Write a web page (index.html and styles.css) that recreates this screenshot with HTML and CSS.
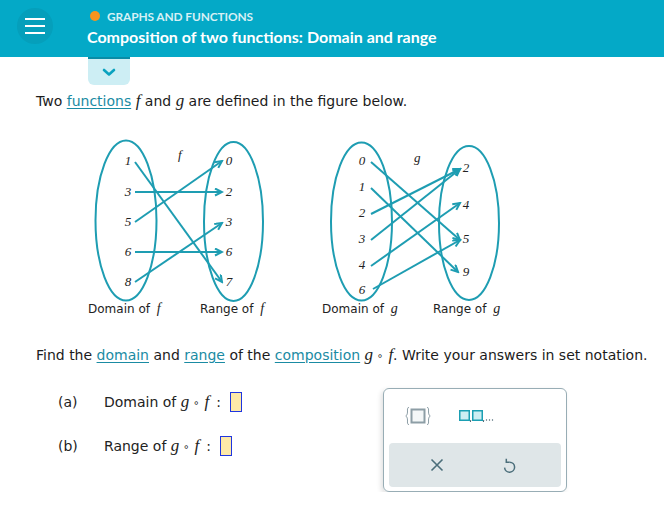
FILE: index.html
```html
<!DOCTYPE html>
<html>
<head>
<meta charset="utf-8">
<link rel="stylesheet" href="styles.css">
</head>
<body>
<header class="topbar">
  <button class="menu" aria-label="menu"><span></span><span></span><span></span></button>
  <div class="titles">
    <div class="crumb"><span class="dot"></span>GRAPHS AND FUNCTIONS</div>
    <h1 class="title">Composition of two functions: Domain and range</h1>
  </div>
</header>
<div class="tab">
  <svg width="14" height="9" viewBox="0 0 14 9"><path d="M2 2 L7 6.5 L12 2" fill="none" stroke="#0aa2bf" stroke-width="2.6" stroke-linecap="round" stroke-linejoin="round"/></svg>
</div>
<main class="content">
  <p class="intro">Two <a class="link">functions</a> <i class="m">f</i> and <i class="m">g</i> are defined in the figure below.</p>
  <div class="figures">
    <svg class="fig" width="190" height="185" viewBox="0 0 190 185">
      <defs>
        <marker id="ah" markerWidth="10" markerHeight="10" refX="8" refY="4" orient="auto" markerUnits="userSpaceOnUse">
          <path d="M1 0.5 L8 4 L1 7.5" fill="none" stroke="#1e9db2" stroke-width="2" stroke-linejoin="miter"/>
        </marker>
      </defs>
      <ellipse cx="41" cy="83.5" rx="30.5" ry="80" class="oval"/>
      <ellipse cx="148.5" cy="84.5" rx="29.5" ry="79.5" class="oval"/>
      <text x="93" y="22" class="fn">f</text>
      <g class="num" text-anchor="middle">
        <text x="43" y="28">1</text><text x="43" y="59">3</text><text x="43" y="89">5</text><text x="43" y="119">6</text><text x="43" y="149">8</text>
        <text x="144" y="28">0</text><text x="144" y="59">2</text><text x="144" y="89">3</text><text x="144" y="119">6</text><text x="144" y="149">7</text>
      </g>
      <g class="arr">
        <line x1="50" y1="25" x2="137" y2="145"/>
        <line x1="50" y1="55" x2="137" y2="55"/>
        <line x1="50" y1="85" x2="137" y2="24"/>
        <line x1="50" y1="115" x2="137" y2="115"/>
        <line x1="50" y1="145" x2="137" y2="86"/>
      </g>
      <text x="3" y="176" class="cap">Domain of <tspan class="capm" dx="3">f</tspan></text>
      <text x="115" y="176" class="cap">Range of <tspan class="capm" dx="3">f</tspan></text>
    </svg>
    <svg class="fig" width="190" height="185" viewBox="0 0 190 185">
      <ellipse cx="46.5" cy="84.5" rx="30.5" ry="79" class="oval"/>
      <ellipse cx="154" cy="86" rx="30" ry="77" class="oval"/>
      <text x="99" y="25" class="fn">g</text>
      <g class="num" text-anchor="middle">
        <text x="47" y="28">0</text><text x="47" y="54">1</text><text x="47" y="80">2</text><text x="47" y="106">3</text><text x="47" y="132">4</text><text x="47" y="157">6</text>
        <text x="151" y="35">2</text><text x="151" y="72">4</text><text x="151" y="106">5</text><text x="151" y="139">9</text>
      </g>
      <g class="arr">
        <line x1="56" y1="25" x2="145" y2="103"/>
        <line x1="56" y1="51" x2="143" y2="135"/>
        <line x1="56" y1="77" x2="145" y2="32"/>
        <line x1="56" y1="103" x2="145" y2="32"/>
        <line x1="56" y1="129" x2="145" y2="66"/>
        <line x1="58" y1="152" x2="145" y2="103"/>
      </g>
      <text x="7" y="176" class="cap">Domain of <tspan class="capm" dx="3">g</tspan></text>
      <text x="118" y="176" class="cap">Range of <tspan class="capm" dx="3">g</tspan></text>
    </svg>
  </div>
  <p class="question">Find the <a class="link">domain</a> and <a class="link">range</a> of the <a class="link">composition</a> <i class="m">g</i><span class="circ">∘</span><i class="m">f</i>. Write your answers in set notation.</p>
  <div class="answers">
    <div class="parts">
      <div class="part"><span class="lbl">(a)</span><span class="ptext">Domain of <i class="m">g</i><span class="circ">∘</span><i class="m">f</i><span class="colon">:</span></span><span class="box"></span></div>
      <div class="part"><span class="lbl">(b)</span><span class="ptext">Range of <i class="m">g</i><span class="circ">∘</span><i class="m">f</i><span class="colon">:</span></span><span class="box"></span></div>
    </div>
    <div class="keypad">
      <div class="tools">
        <svg width="26" height="20" viewBox="0 0 26 20">
          <path d="M4 1.5 C2 1.5 2.5 3 2.5 6 C2.5 9 1 10 0.8 10 C1 10 2.5 11 2.5 14 C2.5 17 2 18.5 4 18.5" fill="none" stroke="#8d9ea6" stroke-width="1"/>
          <path d="M22 1.5 C24 1.5 23.5 3 23.5 6 C23.5 9 25 10 25.2 10 C25 10 23.5 11 23.5 14 C23.5 17 24 18.5 22 18.5" fill="none" stroke="#8d9ea6" stroke-width="1"/>
          <rect x="6.5" y="3.5" width="13" height="13" fill="#f4f7f8" stroke="#8d9ea6" stroke-width="2"/>
        </svg>
        <svg width="38" height="12" viewBox="0 0 38 12">
          <rect x="0.75" y="0.75" width="9.5" height="9.5" fill="#cdeef3" stroke="#1b9fb3" stroke-width="1.5"/>
          <path d="M11.8 10 L11.3 12" stroke="#44626e" stroke-width="1"/>
          <rect x="13.75" y="0.75" width="9.5" height="9.5" fill="#cdeef3" stroke="#1b9fb3" stroke-width="1.5"/>
          <path d="M24.8 10 L24.3 12" stroke="#44626e" stroke-width="1"/>
          <circle cx="27.5" cy="10" r="0.7" fill="#44626e"/><circle cx="30.5" cy="10" r="0.7" fill="#44626e"/><circle cx="33.5" cy="10" r="0.7" fill="#44626e"/>
        </svg>
      </div>
      <div class="actions">
        <svg width="14" height="14" viewBox="0 0 14 14"><path d="M1.5 1.5 L12.5 12.5 M12.5 1.5 L1.5 12.5" stroke="#4b6e7a" stroke-width="1.6"/></svg>
        <svg width="13" height="15" viewBox="0 0 13 15"><path d="M3.3 0.8 V4.2 H6.6" fill="none" stroke="#4b6e7a" stroke-width="1.5" stroke-linejoin="miter"/><path d="M6.6 4.2 A5 5 0 1 1 1.6 9.6" fill="none" stroke="#4b6e7a" stroke-width="1.5"/></svg>
      </div>
    </div>
  </div>
</main>
</body>
</html>
```
FILE: styles.css
```css
* { box-sizing: border-box; }
body { margin: 0; background: #fff; font-family: "DejaVu Sans", Verdana, sans-serif; color: #1c1c1c; }

.topbar { height: 57px; background: #04a9c7; display: flex; align-items: flex-start; padding-left: 17px; }
.menu { width: 36px; height: 36px; margin-top: 8px; border: none; border-radius: 50%; background: #059fbb; display: flex; flex-direction: column; align-items: center; justify-content: center; gap: 5px; padding: 0; }
.menu span { display: block; width: 20px; height: 2px; background: #fff; }
.titles { margin-left: 34px; padding-top: 9px; font-family: "Lato", "Open Sans", sans-serif; }
.crumb { display: flex; align-items: center; padding-left: 3px; height: 14px; font-size: 11.9px; font-weight: 700; color: #d6f0f5; letter-spacing: -0.1px; }
.dot { width: 10px; height: 10px; border-radius: 50%; background: #f7941d; margin-right: 7px; }
.title { margin: 4px 0 0; font-size: 16px; line-height: 20px; font-weight: 700; color: #fff; }

.tab { margin-left: 88px; width: 42px; height: 28px; background: #cdeef4; border-top: 2px solid #0a8ca6; border-radius: 0 0 6px 6px; display: flex; align-items: center; justify-content: center; }

.content { padding-left: 36px; }
.intro { margin: 7px 0 0; font-size: 14px; line-height: 18px; }
.link { color: #1a8ba3; text-decoration: underline; text-underline-offset: 2px; }
.m { font-family: "Liberation Serif", "Times New Roman", serif; font-style: italic; font-size: 17px; }
.circ { font-family: "DejaVu Sans", sans-serif; font-size: 10px; margin: 0 5px 0 4px; vertical-align: 1px; }
.colon { margin-left: 7px; }

.figures { display: flex; gap: 40px; margin: 27px 0 0 49px; }
.fig { display: block; }
.oval { fill: none; stroke: #1e9db2; stroke-width: 2; }
.arr line { stroke: #1e9db2; stroke-width: 2; marker-end: url(#ah); }
.num { font-family: "Liberation Serif", serif; font-style: italic; font-size: 13px; fill: #222; }
.fn { font-family: "Liberation Serif", serif; font-style: italic; font-size: 13px; fill: #222; }
.cap { font-family: "DejaVu Sans", sans-serif; font-size: 12px; fill: #222; }
.capm { font-family: "Liberation Serif", serif; font-style: italic; font-size: 14px; }

.question { margin: 24px 0 0; font-size: 14px; line-height: 18px; }

.answers { display: flex; margin-top: 23px; }
.parts { margin-left: 22px; padding-top: 3px; display: flex; flex-direction: column; gap: 23px; }
.part { display: flex; align-items: center; height: 21px; font-size: 14px; color: #222; }
.lbl { width: 46px; }
.ptext { white-space: nowrap; }
.box { display: inline-block; width: 12px; height: 20px; margin-left: 9px; background: #fde9a8; border: 1.5px solid #1f36e0; }

.keypad { margin-left: auto; margin-right: 97px; width: 184px; height: 104px; border: 1px solid #98adb5; border-radius: 6px; padding: 0 5px 4px; box-shadow: -2px 2px 5px rgba(0,0,0,0.12); display: flex; flex-direction: column; }
.tools { height: 54px; display: flex; align-items: center; padding-left: 16px; gap: 28px; }
.actions { flex: 1; background: #dfe6e8; border-radius: 4px; display: flex; align-items: center; justify-content: space-around; padding: 0 16px 0 12px; }
```
